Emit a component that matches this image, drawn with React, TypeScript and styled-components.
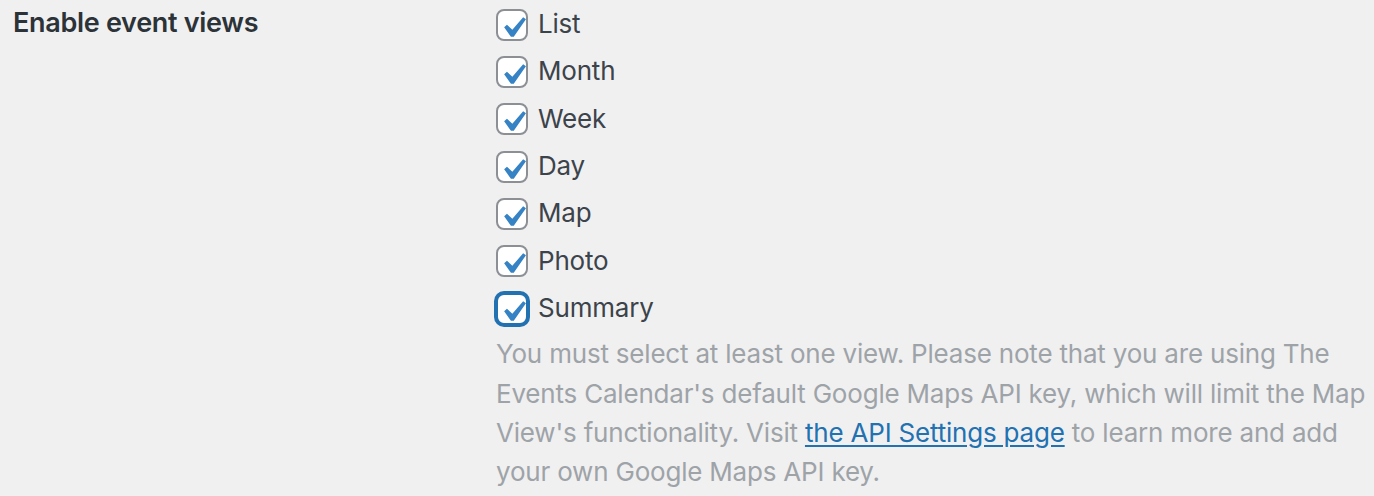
import styled, { createGlobalStyle } from 'styled-components'

const GlobalStyle = createGlobalStyle`
  html, body {
    margin: 0;
    padding: 0;
    background: #f0f0f1;
  }
  body {
    font-family: Inter, "Noto Sans", "Liberation Sans", sans-serif;
    color: #3c434a;
  }
`

const FormRow = styled.div`
  display: grid;
  grid-template-columns: 483px 1fr;
  padding-left: 13px;
`

const Heading = styled.div`
  font-size: 27px;
  font-weight: 600;
  letter-spacing: -0.3px;
  color: #2c3338;
  line-height: 46px;
`

const Options = styled.fieldset`
  margin: 0;
  padding: 0;
  border: none;
  display: flex;
  flex-direction: column;
`

const OptionRow = styled.label`
  display: flex;
  align-items: center;
  gap: 10px;
  height: 47.33px;
  font-size: 26px;
  letter-spacing: -0.2px;
  color: #3c434a;
  cursor: pointer;
`

const Box = styled.span<{ $focused?: boolean }>`
  position: relative;
  flex: none;
  box-sizing: border-box;
  width: 32px;
  height: 32px;
  margin-top: 2px;
  border: 2px solid ${p => (p.$focused ? '#2271b1' : '#8c8f94')};
  border-radius: 8px;
  background: #fff;
  box-shadow: ${p => (p.$focused ? '0 0 0 2px #2271b1' : 'none')};
`

const Check = styled.svg`
  position: absolute;
  left: -6px;
  top: -4px;
  width: 42px;
  height: 42px;
`

const Description = styled.p`
  margin: 3px 0 0;
  font-size: 26px;
  line-height: 39.3px;
  letter-spacing: -0.2px;
  white-space: nowrap;
  color: #9ea3a8;
`

const Link = styled.a`
  color: #2271b1;
  text-decoration: underline;
  text-underline-offset: 3px;
`

const VIEWS = ['List', 'Month', 'Week', 'Day', 'Map', 'Photo', 'Summary']

export default function App () {
  return (
    <>
      <GlobalStyle />
      <FormRow>
        <Heading>Enable event views</Heading>
        <div>
          <Options>
            {VIEWS.map(view => (
              <OptionRow key={view}>
                <Box $focused={view === 'Summary'}>
                  <Check viewBox='0 0 20 20'>
                    <path d='M14.83 4.89l1.34.94-5.81 8.38H9.02L5.78 9.67l1.34-1.25 2.57 2.4z' fill='#3582c4' />
                  </Check>
                </Box>
                {view}
              </OptionRow>
            ))}
          </Options>
          <Description>
            You must select at least one view. Please note that you are using The<br />
            Events Calendar's default Google Maps API key, which will limit the Map<br />
            View's functionality. Visit <Link href='#'>the API Settings page</Link> to learn more and add<br />
            your own Google Maps API key.
          </Description>
        </div>
      </FormRow>
    </>
  )
}
